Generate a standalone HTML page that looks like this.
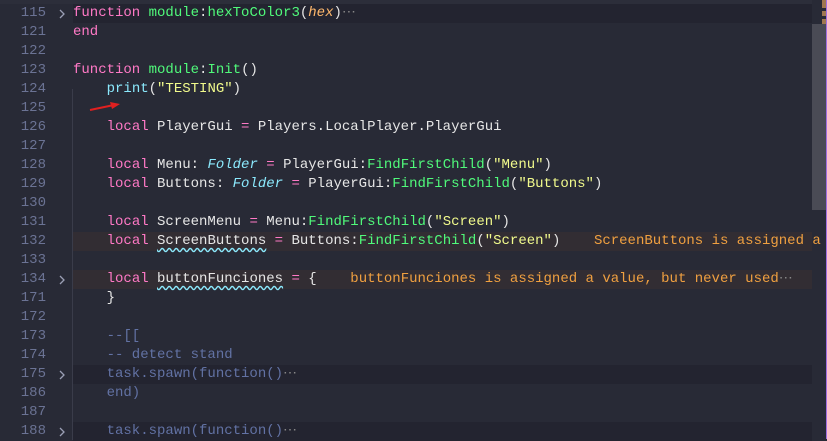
<!DOCTYPE html><html><head><style>
body{margin:0;width:827px;height:439px;overflow:hidden;background:#282a36;font-family:"Liberation Mono",monospace;font-size:14px;}
.l{position:absolute;left:0;width:812px;height:19px;line-height:19px;white-space:pre;}
.n{position:absolute;left:0;width:46px;text-align:right;color:#6b7394;}
.c{position:absolute;left:73px;color:#e6e6e6;}
.f{position:absolute;left:58px;top:5px;}
.k{color:#ff79c6}.g{color:#50fa7b}.s{color:#f1fa8c}.cy{color:#8be9fd}.i{color:#ffb86c;font-style:italic}.ic{color:#8be9fd;font-style:italic}.cm{color:#6272a4}.w{color:#f0a040}
.u{text-decoration:underline wavy #8be9fd;text-underline-offset:3px}
</style></head><body>
<div style="position:absolute;left:0;top:0;width:812px;height:4px;background:#2c2e3a"></div>
<div style="position:absolute;left:72px;top:89px;width:1px;height:351px;background:#3a3c4a"></div>
<div style="position:absolute;left:812px;top:24px;width:14px;height:186px;background:#4a4b55"></div>
<div style="position:absolute;left:822px;top:0;width:4px;height:8px;background:#a07850"></div>
<div style="position:absolute;left:822px;top:11px;width:4px;height:5px;background:#a07850"></div>
<div style="position:absolute;left:822px;top:19px;width:4px;height:5px;background:#a07850"></div>
<div style="position:absolute;left:826px;top:0;width:1px;height:439px;background:#a070e0"></div>
<div style="position:absolute;left:0;top:1px;width:0;height:0">
<div class="l" style="top:3px"><span class="n">115</span><svg class="f" width="8" height="10"><path d="M2 1 L6 5 L2 9" stroke="#9a9fb5" stroke-width="1.3" fill="none"/></svg><div style="position:absolute;left:73px;width:739px;height:19px;background:#232430"></div><span class="c"><span class="k">function</span> <span class="g">module</span>:<span class="g">hexToColor3</span>(<span class="i">hex</span>)<span style="color:#888">⋯</span></span></div>
<div class="l" style="top:22px"><span class="n">121</span><span class="c"><span class="k">end</span></span></div>
<div class="l" style="top:41px"><span class="n">122</span></div>
<div class="l" style="top:60px"><span class="n">123</span><span class="c"><span class="k">function</span> <span class="g">module</span>:<span class="g">Init</span>()</span></div>
<div class="l" style="top:79px"><span class="n">124</span><span class="c">    <span class="cy">print</span>(<span class="s">"TESTING"</span>)</span></div>
<div class="l" style="top:98px"><span class="n">125</span><svg style="position:absolute;left:88px;top:3px" width="34" height="10"><path d="M2 8 L26 3" stroke="#e02020" stroke-width="2"/><path d="M22 0 L32 2 L24 7Z" fill="#e02020"/></svg></div>
<div class="l" style="top:117px"><span class="n">126</span><span class="c">    <span class="k">local</span> PlayerGui <span class="k">=</span> Players.LocalPlayer.PlayerGui</span></div>
<div class="l" style="top:136px"><span class="n">127</span></div>
<div class="l" style="top:155px"><span class="n">128</span><span class="c">    <span class="k">local</span> Menu: <span class="ic">Folder</span> <span class="k">=</span> PlayerGui:<span class="g">FindFirstChild</span>(<span class="s">"Menu"</span>)</span></div>
<div class="l" style="top:174px"><span class="n">129</span><span class="c">    <span class="k">local</span> Buttons: <span class="ic">Folder</span> <span class="k">=</span> PlayerGui:<span class="g">FindFirstChild</span>(<span class="s">"Buttons"</span>)</span></div>
<div class="l" style="top:193px"><span class="n">130</span></div>
<div class="l" style="top:212px"><span class="n">131</span><span class="c">    <span class="k">local</span> ScreenMenu <span class="k">=</span> Menu:<span class="g">FindFirstChild</span>(<span class="s">"Screen"</span>)</span></div>
<div class="l" style="top:231px"><span class="n">132</span><div style="position:absolute;left:73px;width:739px;height:19px;background:#322d33"></div><span class="c">    <span class="k">local</span> <span class="u">ScreenButtons</span> <span class="k">=</span> Buttons:<span class="g">FindFirstChild</span>(<span class="s">"Screen"</span>)    <span class="w">ScreenButtons is assigned a</span></span></div>
<div class="l" style="top:250px"><span class="n">133</span></div>
<div class="l" style="top:269px"><span class="n">134</span><svg class="f" width="8" height="10"><path d="M2 1 L6 5 L2 9" stroke="#9a9fb5" stroke-width="1.3" fill="none"/></svg><div style="position:absolute;left:73px;width:739px;height:19px;background:#322d33"></div><span class="c">    <span class="k">local</span> <span class="u">buttonFunciones</span> <span class="k">=</span> {    <span class="w">buttonFunciones is assigned a value, but never used</span><span style="color:#888">⋯</span></span></div>
<div class="l" style="top:288px"><span class="n">171</span><span class="c">    }</span></div>
<div class="l" style="top:307px"><span class="n">172</span></div>
<div class="l" style="top:326px"><span class="n">173</span><span class="c cm">    --[[</span></div>
<div class="l" style="top:345px"><span class="n">174</span><span class="c cm">    -- detect stand</span></div>
<div class="l" style="top:364px"><span class="n">175</span><svg class="f" width="8" height="10"><path d="M2 1 L6 5 L2 9" stroke="#9a9fb5" stroke-width="1.3" fill="none"/></svg><div style="position:absolute;left:73px;width:739px;height:19px;background:#232430"></div><span class="c cm">    task.spawn(function()<span style="color:#888">⋯</span></span></div>
<div class="l" style="top:383px"><span class="n">186</span><span class="c cm">    end)</span></div>
<div class="l" style="top:402px"><span class="n">187</span></div>
<div class="l" style="top:421px"><span class="n">188</span><svg class="f" width="8" height="10"><path d="M2 1 L6 5 L2 9" stroke="#9a9fb5" stroke-width="1.3" fill="none"/></svg><div style="position:absolute;left:73px;width:739px;height:19px;background:#232430"></div><span class="c cm">    task.spawn(function()<span style="color:#888">⋯</span></span></div>
</div>
</body></html>
